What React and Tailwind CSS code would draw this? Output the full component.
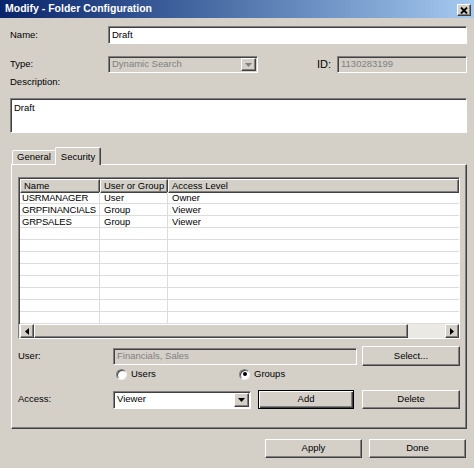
// Classic Windows-style "Modify - Folder Configuration" dialog

const sunken =
  "border border-t-[#808080] border-l-[#808080] border-b-white border-r-white shadow-[inset_1px_1px_0_#404040]";
const raised =
  "border border-t-white border-l-white border-b-[#404040] border-r-[#404040] shadow-[inset_-1px_-1px_0_#808080]";

function DownArrow({ disabled }) {
  return (
    <div className={`w-[15px] h-full flex items-center justify-center bg-[#d4d0c8] ${raised}`}>
      <svg width="7" height="4" viewBox="0 0 7 4">
        <path d="M0 0H7L3.5 4Z" fill={disabled ? "#808080" : "#000"} />
      </svg>
    </div>
  );
}

function Button({ children, className = "", isDefault = false }) {
  return (
    <div
      className={`flex items-center justify-center bg-[#d4d0c8] text-black ${
        isDefault
          ? "border border-black shadow-[inset_1px_1px_0_#fff,inset_-1px_-1px_0_#404040,inset_-2px_-2px_0_#808080]"
          : raised
      } ${className}`}
    >
      {children}
    </div>
  );
}

function Radio({ checked, label }) {
  return (
    <div className="flex items-center gap-[4px]">
      <div className="w-[11px] h-[11px] rounded-full bg-white border border-t-[#808080] border-l-[#808080] border-b-[#f0f0f0] border-r-[#f0f0f0] shadow-[inset_1px_1px_0_#404040] flex items-center justify-center">
        {checked && <div className="w-[4px] h-[4px] rounded-full bg-black" />}
      </div>
      <span>{label}</span>
    </div>
  );
}

const rows = [
  { name: "USRMANAGER", type: "User", level: "Owner" },
  { name: "GRPFINANCIALS", type: "Group", level: "Viewer" },
  { name: "GRPSALES", type: "Group", level: "Viewer" },
];

function App() {
  const listRows = [...rows];
  while (listRows.length < 11) listRows.push({ name: "", type: "", level: "" });

  return (
    <div className="w-[474px] h-[468px] bg-[#d4d0c8] flex flex-col text-[9.5px] text-black font-['Liberation_Sans',Arial,sans-serif] overflow-hidden">
      {/* Title bar */}
      <div className="h-[18px] flex items-center justify-between pl-[5px] pr-[3px] bg-gradient-to-r from-[#0a246a] to-[#a6caf0]">
        <span className="text-white font-bold text-[10.5px]">Modify - Folder Configuration</span>
        <div className={`w-[14px] h-[12px] mt-[2px] bg-[#d4d0c8] flex items-center justify-center ${raised}`}>
          <svg width="8" height="7" viewBox="0 0 8 7">
            <path d="M1 0.5L7 6.5M7 0.5L1 6.5" stroke="#000" strokeWidth="1.8" />
          </svg>
        </div>
      </div>

      <div className="flex flex-col pl-[10px] pr-[7px]">
        {/* Name */}
        <div className="flex items-center mt-[8px]">
          <span className="w-[98px]">Name:</span>
          <div className={`flex-1 h-[18px] bg-white flex items-center pl-[3px] ${sunken}`}>Draft</div>
        </div>

        {/* Type / ID */}
        <div className="flex items-center mt-[12px]">
          <span className="w-[98px]">Type:</span>
          <div className={`w-[150px] h-[17px] flex items-center ${sunken}`}>
            <span className="flex-1 pl-[3px] text-[#808080]">Dynamic Search</span>
            <div className="h-full py-[1px] pr-[1px]">
              <DownArrow disabled />
            </div>
          </div>
          <span className="ml-[59px] w-[20px] text-[11px]">ID:</span>
          <div className={`flex-1 h-[17px] flex items-center pl-[3px] text-[#808080] ${sunken}`}>1130283199</div>
        </div>

        {/* Description */}
        <span className="mt-[2px] h-[12px]">Description:</span>
        <div className={`mt-[11px] h-[35px] bg-white pl-[3px] pt-[2px] ${sunken}`}>Draft</div>

        {/* Tabs */}
        <div className="flex items-end h-[17px] mt-[14px] ml-[2px] relative z-10">
          <div className="h-[14px] px-[4px] flex items-center border-t border-l border-t-white border-l-white border-r border-r-[#404040] rounded-t-[2px]">
            General
          </div>
          <div className="h-[18px] -mb-px -ml-px px-[5px] flex items-start pt-[2px] bg-[#d4d0c8] border-t border-l border-t-white border-l-white border-r border-r-[#404040] shadow-[inset_-1px_0_0_#808080] rounded-t-[2px]">
            Security
          </div>
        </div>

        {/* Tab panel */}
        <div className="ml-[1px] h-[265px] flex flex-col px-[6px] pt-[12px] border border-t-white border-l-white border-b-[#404040] border-r-[#404040] shadow-[inset_-1px_-1px_0_#808080]">
          {/* List view */}
          <div className={`h-[162px] flex flex-col bg-white ${sunken}`}>
            <div className="flex h-[14px] shrink-0 pl-[1px] pt-[1px]">
              {[
                ["Name", "w-[80px]"],
                ["User or Group", "w-[68px]"],
                ["Access Level", "flex-1"],
              ].map(([h, w]) => (
                <div key={h} className={`${w} h-[14px] flex items-center pl-[3px] bg-[#d4d0c8] ${raised}`}>
                  {h}
                </div>
              ))}
            </div>
            <div className="flex-1 flex flex-col pl-[1px] overflow-hidden">
              {listRows.map((r, i) => (
                <div key={i} className="flex h-[12px] shrink-0 border-b border-b-[#dcdcdc]">
                  <div className="w-[80px] pl-[2px] tracking-[-0.2px] border-r border-r-[#dcdcdc] leading-[11px] whitespace-nowrap overflow-hidden">
                    {r.name}
                  </div>
                  <div className="w-[68px] pl-[4px] border-r border-r-[#dcdcdc] leading-[11px]">{r.type}</div>
                  <div className="flex-1 pl-[4px] leading-[11px]">{r.level}</div>
                </div>
              ))}
            </div>
            {/* Horizontal scrollbar */}
            <div className="flex h-[14px] shrink-0 pl-[1px] bg-[#ebe9e4]">
              <div className={`w-[14px] h-full bg-[#d4d0c8] flex items-center justify-center ${raised}`}>
                <svg width="4" height="7" viewBox="0 0 4 7">
                  <path d="M4 0V7L0 3.5Z" fill="#000" />
                </svg>
              </div>
              <div className={`w-[374px] h-full bg-[#d4d0c8] ${raised}`} />
              <div className="flex-1" />
              <div className={`w-[14px] h-full bg-[#d4d0c8] flex items-center justify-center ${raised}`}>
                <svg width="4" height="7" viewBox="0 0 4 7">
                  <path d="M0 0V7L4 3.5Z" fill="#000" />
                </svg>
              </div>
            </div>
          </div>

          {/* User */}
          <div className="flex items-center mt-[7px] h-[20px]">
            <span className="w-[95px]">User:</span>
            <div className={`w-[244px] h-[17px] flex items-center pl-[3px] text-[#808080] ${sunken}`}>Financials, Sales</div>
            <Button className="ml-auto w-[98px] h-[20px]">Select...</Button>
          </div>

          {/* Radios */}
          <div className="flex items-center h-[14px] mt-[1px] pl-[98px]">
            <div className="w-[123px]">
              <Radio label="Users" />
            </div>
            <Radio checked label="Groups" />
          </div>

          {/* Access */}
          <div className="flex items-center mt-[9px] h-[19px]">
            <span className="w-[95px]">Access:</span>
            <div className={`w-[138px] h-[18px] flex items-center bg-white ${sunken}`}>
              <span className="flex-1 pl-[3px]">Viewer</span>
              <div className="h-full py-[1px] pr-[1px]">
                <DownArrow />
              </div>
            </div>
            <Button isDefault className="ml-[7px] w-[96px] h-[19px]">Add</Button>
            <Button className="ml-auto w-[98px] h-[19px]">Delete</Button>
          </div>
        </div>

        {/* Bottom buttons */}
        <div className="flex justify-end gap-[7px] mt-[10px] pr-[1px]">
          <Button className="w-[97px] h-[19px]">Apply</Button>
          <Button className="w-[97px] h-[19px]">Done</Button>
        </div>
      </div>
    </div>
  );
}

export default App;
